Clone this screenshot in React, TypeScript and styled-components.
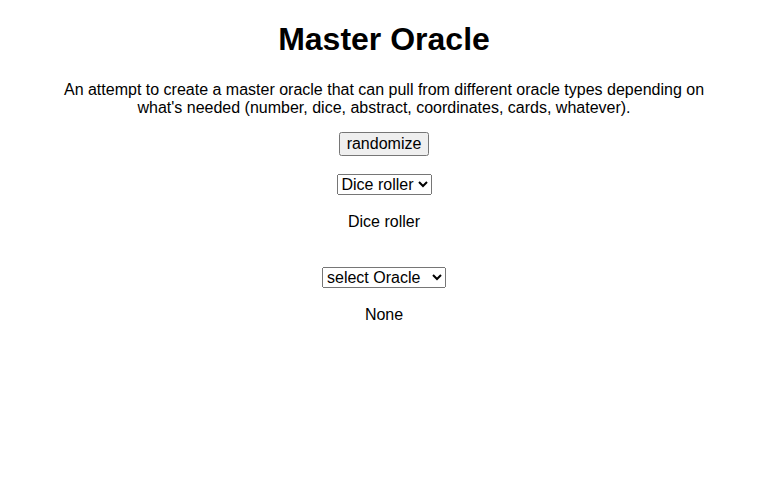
import * as React from "react";
import styled, { createGlobalStyle } from "styled-components";

const GlobalStyle = createGlobalStyle`
    body {
        margin: 0;
        font-family: "Liberation Sans", Arial, sans-serif;
        background: white;
        color: black;
    }
`

const Page = styled.div`
    display: flex;
    flex-direction: column;
    align-items: center;
    text-align: center;
`

const Title = styled.h1`
    font-size: 32px;
    margin: 21px 0 23px;
`

const Intro = styled.p`
    margin: 0 0 15px;
    max-width: 660px;
`

const Controls = styled.div`
    display: flex;
    flex-direction: column;
    align-items: center;
    gap: 18px;
`

const Sections = styled.div`
    display: flex;
    flex-direction: column;
    align-items: center;
    gap: 36px;
`

const Section = styled.div`
    display: flex;
    flex-direction: column;
    align-items: center;
    gap: 18px;
`

const Button = styled.button`
    font-family: "Liberation Sans", Arial, sans-serif;
    font-size: 16px;
`

const Select = styled.select<{ $width?: number }>`
    font-family: "Liberation Sans", Arial, sans-serif;
    font-size: 16px;
    ${p => p.$width ? `width: ${p.$width}px;` : ""}
`

const Result = styled.div`
    line-height: 18px;
`

const App = () => {
    const [dice, setDice] = React.useState("Dice roller")
    const [oracle, setOracle] = React.useState("")

    return (
        <Page>
            <GlobalStyle />
            <Title>Master Oracle</Title>
            <Intro>
                An attempt to create a master oracle that can pull from different oracle types depending on
                what's needed (number, dice, abstract, coordinates, cards, whatever).
            </Intro>
            <Controls>
                <Button>randomize</Button>
                <Sections>
                    <Section>
                        <Select value={dice} onChange={e => setDice(e.target.value)}>
                            <option>Dice roller</option>
                        </Select>
                        <Result>{dice}</Result>
                    </Section>
                    <Section>
                        <Select $width={124} value={oracle} onChange={e => setOracle(e.target.value)}>
                            <option value="">select Oracle</option>
                            <option value="number">number</option>
                            <option value="dice">dice</option>
                            <option value="abstract">abstract</option>
                            <option value="coordinates">coordinates</option>
                            <option value="cards">cards</option>
                        </Select>
                        <Result>{oracle || "None"}</Result>
                    </Section>
                </Sections>
            </Controls>
        </Page>
    )
}

export default App
